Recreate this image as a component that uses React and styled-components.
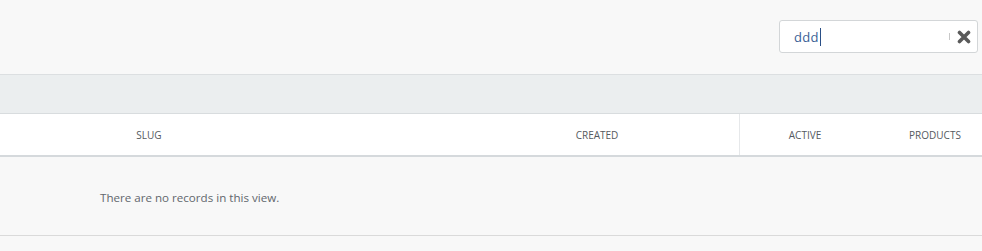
import React from 'react';
import styled, { createGlobalStyle } from 'styled-components';

const GlobalStyle = createGlobalStyle`
    html, body {
        margin: 0;
        padding: 0;
        background: #f8f8f8;
        font-family: "Open Sans", "Noto Sans", sans-serif;
    }
`;

const Page = styled.div`
    width: 982px;
    height: 251px;
    overflow: hidden;
    background: #f8f8f8;
`;

const Toolbar = styled.div`
    height: 75px;
    display: flex;
    justify-content: flex-end;
    align-items: flex-start;
    padding: 20px 4px 0 0;
    box-sizing: border-box;
    border-bottom: 1px solid #dcdfe1;
`;

const SearchBox = styled.div`
    position: relative;
    width: 199px;
    height: 33px;
    box-sizing: border-box;
    border: 1px solid #d3d6d8;
    border-radius: 3px;
    background: #fff;
    display: flex;
    align-items: center;
    padding: 0 0 0 14px;
`;

const SearchText = styled.span`
    font-size: 13px;
    color: #3a5f96;
    letter-spacing: 0.3px;
    border-right: 1px solid #2a4f86;
    padding-right: 1px;
    line-height: 18px;
`;

const Tick = styled.span`
    position: absolute;
    right: 27px;
    top: 12px;
    width: 1px;
    height: 7px;
    background: #c8c8c8;
`;

const ClearIcon = styled.svg`
    position: absolute;
    right: 6px;
    top: 9px;
`;

const Band = styled.div`
    height: 38px;
    background: #ebeeef;
    border-bottom: 1px solid #d8dcde;
`;

const HeaderRow = styled.div`
    height: 41px;
    background: #fff;
    border-bottom: 2px solid #d5d9dc;
    display: grid;
    grid-template-columns: 739px 1px 131px 111px;
`;

const HeadCell = styled.div`
    position: relative;
    font-size: 10px;
    color: #555a60;
    text-transform: uppercase;
    display: flex;
    align-items: center;
`;

const HeadLabel = styled.span`
    position: absolute;
    left: ${p => p.$center}px;
    transform: translateX(-50%);
    white-space: nowrap;
`;

const Divider = styled.div`
    background: #e6e8ea;
`;

const Body = styled.div`
    height: 79px;
    border-bottom: 1px solid #dadada;
    display: flex;
    align-items: center;
    padding-left: 100px;
    box-sizing: border-box;
`;

const Empty = styled.span`
    font-size: 11.6px;
    color: #62676d;
    margin-top: 2px;
`;

export default function App() {
    return (
        <Page>
            <GlobalStyle />
            <Toolbar>
                <SearchBox>
                    <SearchText>ddd</SearchText>
                    <Tick />
                    <ClearIcon width="14" height="14" viewBox="0 0 14 14">
                        <path d="M2.5 2.5 L11.5 11.5 M11.5 2.5 L2.5 11.5" stroke="#5a5a5a" strokeWidth="3.6" strokeLinecap="round" />
                    </ClearIcon>
                </SearchBox>
            </Toolbar>
            <Band />
            <HeaderRow>
                <HeadCell>
                    <HeadLabel $center={149}>Slug</HeadLabel>
                    <HeadLabel $center={597}>Created</HeadLabel>
                </HeadCell>
                <Divider />
                <HeadCell>
                    <HeadLabel $center={65}>Active</HeadLabel>
                </HeadCell>
                <HeadCell>
                    <HeadLabel $center={64}>Products</HeadLabel>
                </HeadCell>
            </HeaderRow>
            <Body>
                <Empty>There are no records in this view.</Empty>
            </Body>
        </Page>
    );
}
